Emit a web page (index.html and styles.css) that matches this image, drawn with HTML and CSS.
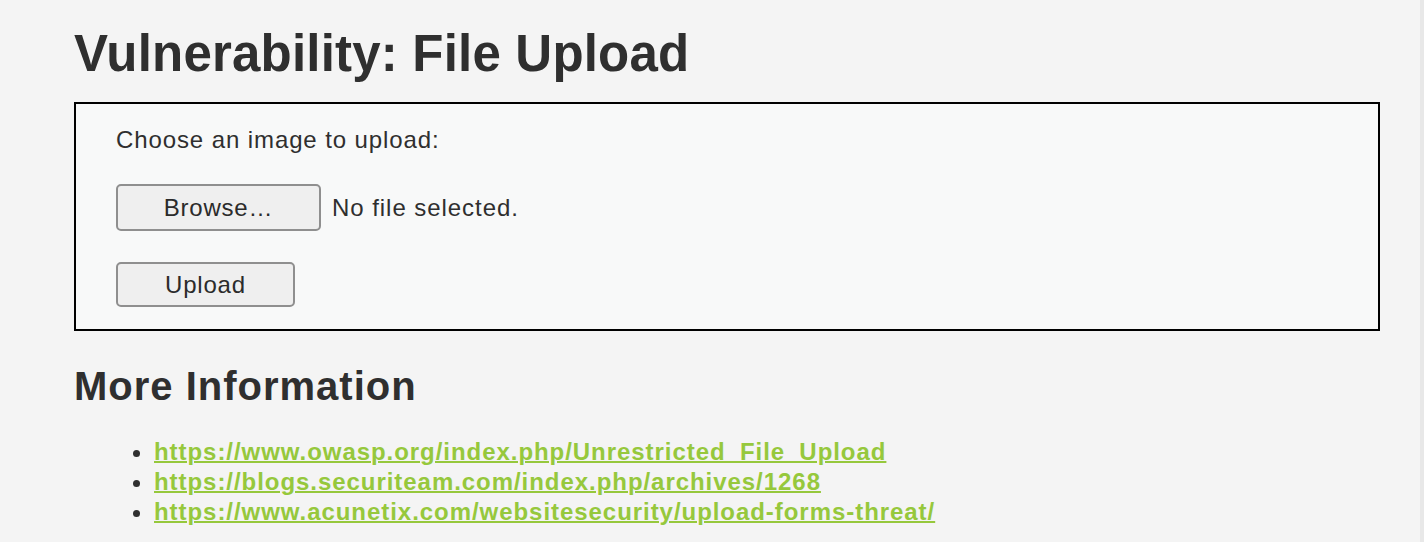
FILE: index.html
```html
<!DOCTYPE html>
<html lang="en">
<head>
<meta charset="utf-8">
<title>Vulnerability: File Upload</title>
<link rel="stylesheet" href="styles.css">
</head>
<body>
<div class="page">
  <h1 class="title">Vulnerability: File Upload</h1>
  <div class="code-area">
    <form class="upload-form">
      <p class="label">Choose an image to upload:</p>
      <div class="file-row">
        <button type="button" class="btn btn-browse">Browse…</button>
        <span class="file-status">No file selected.</span>
      </div>
      <div class="submit-row">
        <button type="button" class="btn btn-upload">Upload</button>
      </div>
    </form>
  </div>
  <h2 class="subtitle">More Information</h2>
  <ul class="links">
    <li><a href="#">https://www.owasp.org/index.php/Unrestricted_File_Upload</a></li>
    <li><a href="#">https://blogs.securiteam.com/index.php/archives/1268</a></li>
    <li><a href="#">https://www.acunetix.com/websitesecurity/upload-forms-threat/</a></li>
  </ul>
</div>
</body>
</html>
```
FILE: styles.css
```css
html, body {
  margin: 0;
  padding: 0;
  background: #f4f4f4;
}
body {
  font-family: "Liberation Sans", Arial, sans-serif;
  color: #2f2f2f;
  height: 542px;
  overflow: hidden;
}
.page {
  width: 1346px;
  height: 542px;
  padding-left: 74px;
  border-right: 4px solid #e8e8e8;
}
.title {
  margin: 0;
  padding-top: 22px;
  font-size: 51px;
  letter-spacing: 0.2px;
  line-height: 64px;
  font-weight: bold;
  color: #2f2f2f;
}
.code-area {
  margin-top: 16px;
  width: 1262px;
  border: 2px solid #000;
  background: #f8f9f9;
  padding: 0 0 22px 40px;
}
.upload-form {
  margin: 0;
}
.label {
  margin: 0;
  padding-top: 20px;
  font-size: 24px;
  letter-spacing: 0.9px;
  line-height: 32px;
}
.file-row {
  margin-top: 28px;
  display: flex;
  align-items: center;
  gap: 11px;
}
.btn {
  font-family: "Liberation Sans", Arial, sans-serif;
  font-size: 24px;
  letter-spacing: 0.8px;
  color: #2b2b2b;
  background: #efefef;
  border: 2px solid #8f8f8f;
  border-radius: 5px;
  padding: 0;
  margin: 0;
}
.btn-browse {
  width: 205px;
  height: 47px;
}
.file-status {
  font-size: 24px;
  letter-spacing: 0.95px;
}
.submit-row {
  display: flex;
  margin-top: 31px;
}
.btn-upload {
  width: 179px;
  height: 45px;
}
.subtitle {
  margin: 0;
  padding-top: 30px;
  font-size: 40px;
  letter-spacing: 1px;
  line-height: 50px;
  font-weight: bold;
}
.links {
  margin: 0;
  padding: 26px 0 0 80px;
  list-style: disc;
  font-size: 24px;
  line-height: 30px;
}
.links a {
  color: #96c83c;
  font-weight: bold;
  letter-spacing: 0.95px;
  text-decoration: underline;
  text-decoration-thickness: 2px;
}
```
